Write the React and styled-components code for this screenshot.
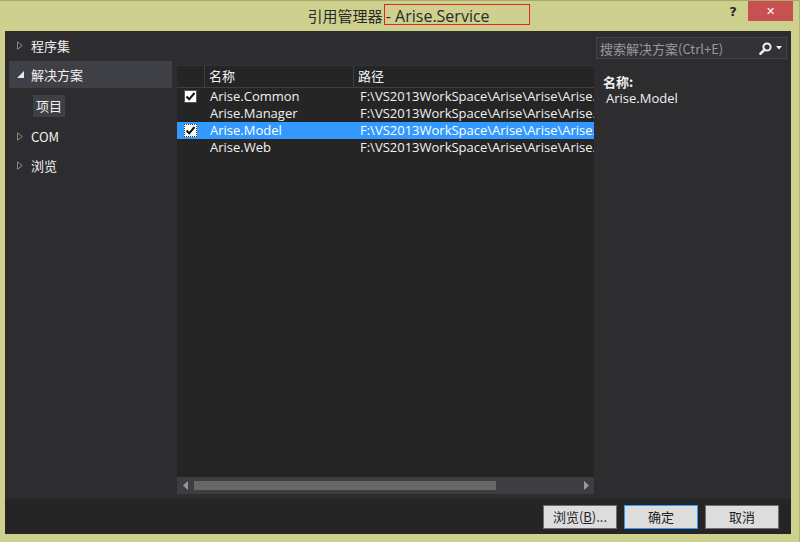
import styled, { createGlobalStyle } from 'styled-components';

const GlobalStyle = createGlobalStyle`
  html, body { margin: 0; padding: 0; }
  body {
    background: #ced08e;
    font-family: "Open Sans", "Noto Sans CJK SC", sans-serif;
  }
`;

const projects = [
  { name: 'Arise.Common', path: 'F:\\VS2013WorkSpace\\Arise\\Arise\\Arise.Common', checked: true },
  { name: 'Arise.Manager', path: 'F:\\VS2013WorkSpace\\Arise\\Arise\\Arise.Manager', checked: false },
  { name: 'Arise.Model', path: 'F:\\VS2013WorkSpace\\Arise\\Arise\\Arise.Model', checked: true, selected: true },
  { name: 'Arise.Web', path: 'F:\\VS2013WorkSpace\\Arise\\Arise\\Arise.Web', checked: false },
];

const Collapsed = () => (
  <svg width="6" height="9" viewBox="0 0 6 9">
    <path d="M0.5 0.8 L5.3 4.5 L0.5 8.2 Z" fill="none" stroke="#8a8a8a" strokeWidth="1" />
  </svg>
);

const Expanded = () => (
  <svg width="7" height="7" viewBox="0 0 7 7">
    <path d="M7 0 L7 7 L0 7 Z" fill="#e8e8e8" />
  </svg>
);

const Check = () => (
  <svg width="11" height="11" viewBox="0 0 11 11">
    <path d="M1.5 5.5 L4.2 8.3 L9.5 2" fill="none" stroke="#111" strokeWidth="2" />
  </svg>
);

const Magnifier = () => (
  <svg width="13" height="13" viewBox="0 0 13 13">
    <circle cx="8" cy="5" r="3.6" fill="none" stroke="#f1f1f1" strokeWidth="2" />
    <path d="M5.6 7.6 L1.5 11.7" stroke="#f1f1f1" strokeWidth="2.6" strokeLinecap="round" />
  </svg>
);

export default function App() {
  return (
    <>
      <GlobalStyle />
      <Window>
        <TitleBar>
          <Title>
            引用管理器 <Marked>- Arise.Service</Marked>
          </Title>
          <Controls>
            <Help>?</Help>
            <Close>✕</Close>
          </Controls>
        </TitleBar>

        <Body>
          <Main>
            <LeftPanel>
              <NavItem>
                <Twisty><Collapsed /></Twisty>程序集
              </NavItem>
              <NavItem active>
                <Twisty><Expanded /></Twisty>解决方案
              </NavItem>
              <SubRow>
                <SubLabel>项目</SubLabel>
              </SubRow>
              <NavItem>
                <Twisty><Collapsed /></Twisty>COM
              </NavItem>
              <NavItem>
                <Twisty><Collapsed /></Twisty>浏览
              </NavItem>
            </LeftPanel>

            <ListPanel>
              <Header>
                <HeadCell />
                <HeadCell>名称</HeadCell>
                <HeadCell last>路径</HeadCell>
              </Header>
              <Rows>
                {projects.map(p => (
                  <Row key={p.name} selected={p.selected}>
                    <CheckCell>
                      {p.checked && (
                        <CheckBox focused={p.selected}>
                          <Check />
                        </CheckBox>
                      )}
                    </CheckCell>
                    <Cell>{p.name}</Cell>
                    <PathCell>{p.path}</PathCell>
                  </Row>
                ))}
              </Rows>
              <HScroll>
                <Arrow>
                  <svg width="5" height="9" viewBox="0 0 5 9"><path d="M5 0 L0 4.5 L5 9 Z" fill="#999" /></svg>
                </Arrow>
                <Track>
                  <Thumb />
                </Track>
                <Arrow>
                  <svg width="5" height="9" viewBox="0 0 5 9"><path d="M0 0 L5 4.5 L0 9 Z" fill="#999" /></svg>
                </Arrow>
              </HScroll>
            </ListPanel>

            <RightPanel>
              <Search>
                <Placeholder>搜索解决方案(Ctrl+E)</Placeholder>
                <SearchIcon><Magnifier /></SearchIcon>
                <svg width="6" height="4" viewBox="0 0 6 4"><path d="M0 0 L6 0 L3 3.5 Z" fill="#f1f1f1" /></svg>
              </Search>
              <Details>
                <DetailLabel>名称:</DetailLabel>
                <DetailValue>Arise.Model</DetailValue>
              </Details>
            </RightPanel>
          </Main>

          <Footer>
            <Button>浏览(<u>B</u>)...</Button>
            <Button primary>确定</Button>
            <Button>取消</Button>
          </Footer>
        </Body>
      </Window>
    </>
  );
}

const Window = styled.div`
  width: 800px;
  height: 542px;
  box-sizing: border-box;
  border-top: 1px solid #a8aa6c;
  border-right: 1px solid #b3b574;
  background: #ced08e;
  display: flex;
  flex-direction: column;
`;

const TitleBar = styled.div`
  position: relative;
  height: 30px;
  display: flex;
  align-items: center;
  justify-content: center;
`;

const Title = styled.div`
  font-family: "Noto Sans CJK SC", sans-serif;
  font-size: 15px;
  color: #2a2a2a;
  line-height: 20px;
  padding-right: 2px;
`;

const Marked = styled.span`
  position: relative;
  font-family: "Open Sans", "Noto Sans CJK SC", sans-serif;
  font-size: 16px;

  &::after {
    content: '';
    position: absolute;
    left: -2px;
    top: -1px;
    width: 144px;
    height: 19px;
    border: 1px solid #e0262b;
  }
`;

const Controls = styled.div`
  position: absolute;
  top: 0;
  right: 6px;
  display: flex;
  align-items: flex-start;
`;

const Help = styled.div`
  width: 30px;
  height: 20px;
  font-family: "DejaVu Sans", sans-serif;
  font-weight: bold;
  font-size: 13px;
  line-height: 21px;
  text-align: center;
  color: #2a2a2a;
`;

const Close = styled.div`
  width: 45px;
  height: 20px;
  background: #c75050;
  color: #fff;
  font-family: "DejaVu Sans", sans-serif;
  font-weight: bold;
  font-size: 11px;
  line-height: 21px;
  text-align: center;
`;

const Body = styled.div`
  flex: 1;
  margin: 0 8px 8px 5px;
  background: #2d2d30;
  display: flex;
  flex-direction: column;
  color: #f1f1f1;
  font-size: 13px;
`;

const Main = styled.div`
  flex: 1;
  display: flex;
  min-height: 0;
`;

const LeftPanel = styled.div`
  width: 172px;
  box-sizing: border-box;
  padding: 1px 5px 0 4px;
  display: flex;
  flex-direction: column;
  gap: 2px;
`;

const NavItem = styled.div`
  height: 27px;
  display: flex;
  align-items: center;
  padding-left: 8px;
  padding-bottom: 1px;
  box-sizing: border-box;
  background: ${p => (p.active ? '#3f3f46' : 'transparent')};
  font-family: "Noto Sans CJK SC", sans-serif;
  font-size: 13px;
  color: #f1f1f1;
`;

const Twisty = styled.span`
  width: 14px;
  display: flex;
  align-items: center;
`;

const SubRow = styled.div`
  height: 31px;
  display: flex;
  align-items: center;
  padding-left: 24px;
`;

const SubLabel = styled.span`
  height: 22px;
  line-height: 22px;
  padding: 0 3px;
  background: #3f3f46;
  font-family: "Noto Sans CJK SC", sans-serif;
  font-size: 13px;
`;

const ListPanel = styled.div`
  width: 417px;
  margin: 34px 0 5px;
  background: #252526;
  display: flex;
  flex-direction: column;
`;

const Header = styled.div`
  height: 23px;
  box-sizing: border-box;
  border-top: 1px solid #333337;
  border-bottom: 1px solid #3f3f46;
  display: grid;
  grid-template-columns: 28px 149px 1fr;
`;

const HeadCell = styled.div`
  border-right: ${p => (p.last ? 'none' : '1px solid #3f3f46')};
  padding-left: 4px;
  line-height: 20px;
  font-family: "Noto Sans CJK SC", sans-serif;
  font-size: 13px;
`;

const Rows = styled.div`
  flex: 1;
  overflow: hidden;
`;

const Row = styled.div`
  height: 17px;
  display: grid;
  grid-template-columns: 28px 149px 1fr;
  align-items: center;
  background: ${p => (p.selected ? '#3399ff' : 'transparent')};
  color: ${p => (p.selected ? '#ffffff' : '#f1f1f1')};
`;

const CheckCell = styled.div`
  display: flex;
  padding-left: 7px;
`;

const CheckBox = styled.span`
  width: 11px;
  height: 11px;
  background: #fff;
  border: 1px ${p => (p.focused ? 'dotted #333' : 'solid #555')};
  display: flex;
`;

const Cell = styled.div`
  padding-left: 5px;
  line-height: 17px;
  white-space: nowrap;
  overflow: hidden;
`;

const PathCell = styled(Cell)`
  padding-left: 6px;
`;

const HScroll = styled.div`
  height: 17px;
  background: #3e3e42;
  display: flex;
  align-items: center;
`;

const Arrow = styled.div`
  width: 16px;
  display: flex;
  justify-content: center;
`;

const Track = styled.div`
  flex: 1;
  height: 9px;
`;

const Thumb = styled.div`
  width: 302px;
  height: 9px;
  margin-left: 1px;
  background: #686868;
`;

const RightPanel = styled.div`
  flex: 1;
  padding: 6px 4px 0 2px;
`;

const Search = styled.div`
  height: 22px;
  box-sizing: border-box;
  background: #333337;
  border: 1px solid #434346;
  display: flex;
  align-items: center;
  padding: 0 4px 0 3px;
`;

const Placeholder = styled.span`
  flex: 1;
  color: #999999;
  font-family: "Noto Sans CJK SC", sans-serif;
  font-size: 13px;
  white-space: nowrap;
`;

const SearchIcon = styled.span`
  display: flex;
  margin-right: 4px;
`;

const Details = styled.div`
  padding: 14px 0 0 7px;
`;

const DetailLabel = styled.div`
  font-family: "Noto Sans CJK SC", sans-serif;
  font-weight: bold;
  font-size: 13px;
  line-height: 17px;
`;

const DetailValue = styled.div`
  padding-left: 3px;
  line-height: 17px;
  font-size: 13px;
`;

const Footer = styled.div`
  height: 35px;
  box-sizing: border-box;
  background: #252526;
  display: flex;
  justify-content: flex-end;
  gap: 7px;
  padding: 6px 12px 0 0;
`;

const Button = styled.button`
  width: 74px;
  height: 24px;
  box-sizing: border-box;
  background: #dddddd;
  border: 1px solid ${p => (p.primary ? '#3399ff' : '#707070')};
  font-family: "Noto Sans CJK SC", sans-serif;
  font-size: 13px;
  color: #1e1e1e;
  padding: 0;
  line-height: 20px;
`;
